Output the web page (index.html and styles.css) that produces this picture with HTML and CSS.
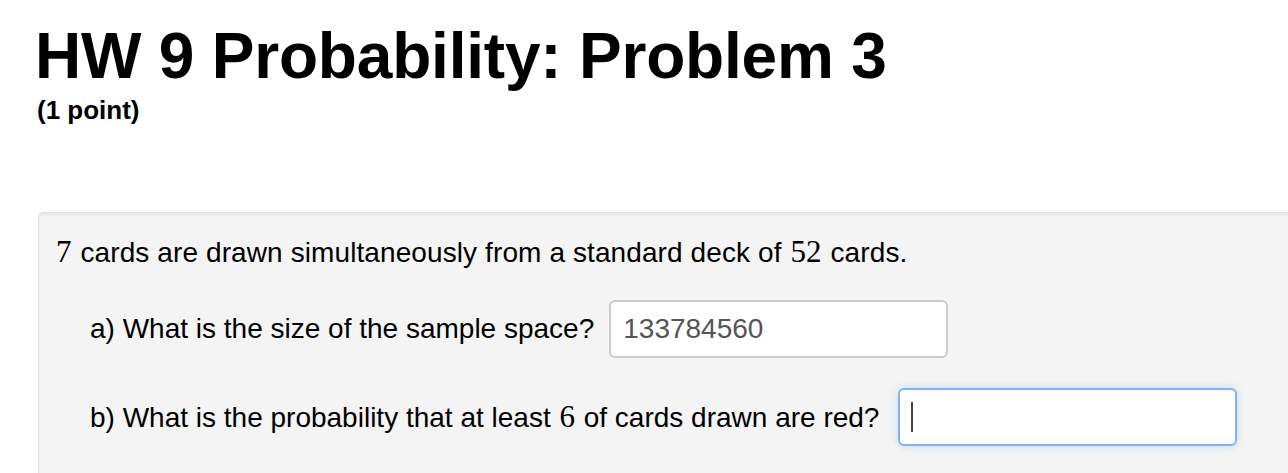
FILE: index.html
```html
<!DOCTYPE html>
<html lang="en">
  <head>
    <meta charset="UTF-8" />
    <meta name="viewport" content="width=device-width, initial-scale=1.0" />
    <title>HW 9 Probability: Problem 3</title>
    <link rel="stylesheet" href="styles.css">
  </head>
  <body>
    <main class="problem">
      <div class="header">
        <h1>HW 9 Probability: Problem 3</h1>
        <p class="points">(1 point)</p>
      </div>
      <div class="problemBox">
        <p class="intro"><span class="math">7</span> cards are drawn simultaneously from a standard deck of <span class="math">52</span> cards.</p>
        <div class="question">
          <label for="ansA">a) What is the size of the sample space?</label>
          <input type="text" id="ansA" value="133784560" />
        </div>
        <div class="question">
          <label for="ansB">b) What is the probability that at least <span class="math">6</span> of cards drawn are red?</label>
          <div class="inputWrap">
            <input type="text" id="ansB" class="focused" />
            <span class="caret"></span>
          </div>
        </div>
      </div>
    </main>
  </body>
</html>
```

FILE: styles.css
```css
* {
  margin: 0;
  padding: 0;
  box-sizing: border-box;
  font-family: "Liberation Sans", Arial, sans-serif;
}

body {
  background: #fff;
  color: #000;
  overflow: hidden;
  height: 473px;
}

.header {
  padding: 20px 0 0 35px;
  height: 212px;
}

.header h1 {
  font-size: 64px;
  font-weight: 700;
  line-height: 72px;
  letter-spacing: -0.2px;
}

.points {
  margin-top: 3px;
  font-size: 26px;
  font-weight: 700;
  line-height: 30px;
  padding-left: 2px;
}

.problemBox {
  margin-left: 38px;
  width: 1300px;
  height: 300px;
  background: #f4f4f4;
  border: 1px solid #e0e0e0;
  border-radius: 5px;
  box-shadow: inset 0 2px 3px rgba(0, 0, 0, 0.06);
  padding: 23px 0 0 16px;
}

.intro {
  font-size: 28px;
  line-height: 32px;
  letter-spacing: 0.1px;
}

.math {
  font-family: "Liberation Serif", "DejaVu Serif", serif;
  font-size: 31px;
  margin: 0 1px;
}

.question {
  display: flex;
  align-items: center;
  margin: 31px 0 0 35px;
  font-size: 28px;
}

.question + .question {
  margin-top: 30px;
}

.question label {
  margin-right: 15px;
}

.question + .question label {
  margin-right: 19px;
}

.question input {
  width: 339px;
  height: 58px;
  border: 2px solid #ccc;
  border-radius: 6px;
  background: #fff;
  font-size: 28px;
  color: #555;
  padding: 0 12px;
  outline: none;
}

.inputWrap {
  position: relative;
}

.question input.focused {
  border-color: #80b5ec;
  box-shadow: 0 0 9px rgba(102, 175, 233, 0.35);
}

.caret {
  position: absolute;
  left: 13px;
  top: 14px;
  width: 2px;
  height: 30px;
  background: #444;
}
```
